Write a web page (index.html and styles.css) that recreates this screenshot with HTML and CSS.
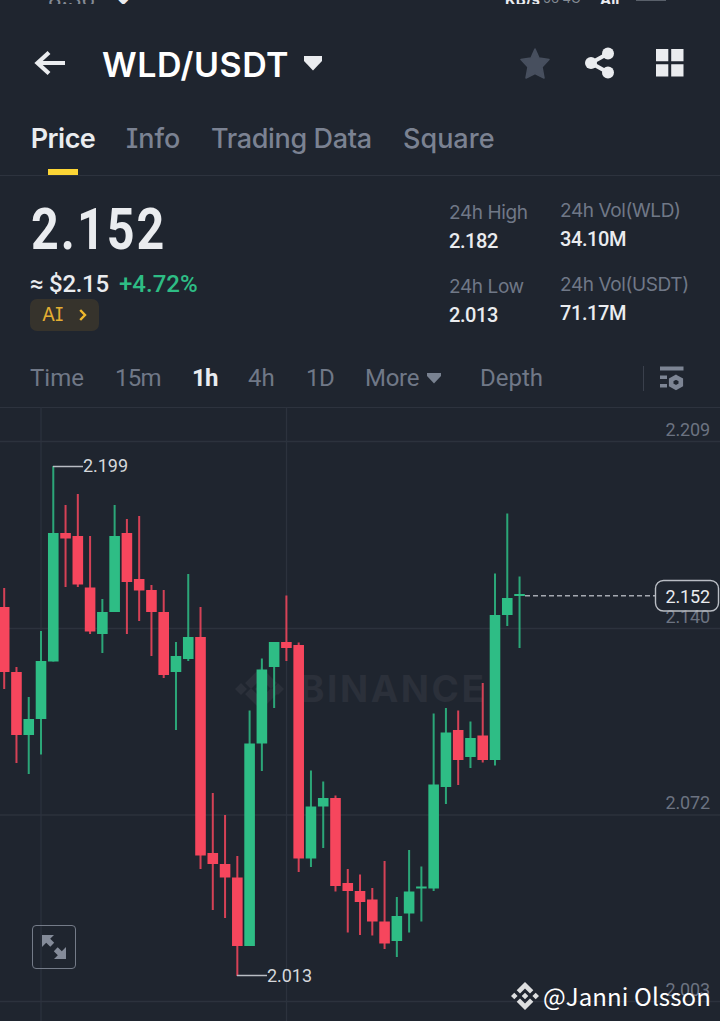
FILE: index.html
```html
<!DOCTYPE html>
<html lang="en">
<head>
    <meta charset="UTF-8">
    <meta name="viewport" content="width=device-width, initial-scale=1.0">
    <title>WLD/USDT</title>

    <link rel="stylesheet" href="styles.css">
</head>
<body>
    <div class="status">
        <span class="clock">8:36</span>
        <span class="drop">◆</span>
        <span class="speed">KB/s</span>
        <span class="signal">56 4G</span>
        <span class="wifi">Ail</span>
        <span class="battery"></span>
    </div>

    <header class="topBar">
        <svg class="back" width="32" height="26" viewBox="0 0 32 26">
            <path d="M31 13H4M15 2.5L3.5 13L15 23.5" fill="none" stroke="#eaecef" stroke-width="4.2"/>
        </svg>
        <h1>WLD/USDT</h1>
        <svg class="caret" width="18" height="15" viewBox="0 0 18 15">
            <path d="M0 0H18V5L9 14.5L0 5Z" fill="#eaecef"/>
        </svg>
        <svg class="star" width="30" height="31" viewBox="0 0 30 31">
            <path d="M15 1L19 10L29 11.5L22 19L24 30L15 25.5L6 30L8 19L1 11.5L11 10Z" fill="#474f5e" stroke="#474f5e" stroke-width="1.5" stroke-linejoin="round"/>
        </svg>
        <svg class="share" width="30" height="32" viewBox="0 0 30 32">
            <path d="M23 6.5L6 16L23 25.5" fill="none" stroke="#eaecef" stroke-width="4"/>
            <circle cx="6" cy="16" r="6" fill="#eaecef"/>
            <circle cx="23" cy="6.5" r="6" fill="#eaecef"/>
            <circle cx="23" cy="25.5" r="6" fill="#eaecef"/>
        </svg>
        <svg class="grid" width="28" height="28" viewBox="0 0 28 28">
            <path d="M0 0H12.3V12.3H0ZM15.2 0H27.5V12.3H15.2ZM0 15.2H12.3V27.5H0ZM15.2 15.2H27.5V27.5H15.2Z" fill="#eaecef"/>
        </svg>
    </header>

    <nav class="tabs">
        <span class="tab active tabPrice">Price</span>
        <span class="tab tabInfo">Info</span>
        <span class="tab tabData">Trading Data</span>
        <span class="tab tabSquare">Square</span>
    </nav>

    <section class="ticker">
        <div class="main">
            <div class="price">2.152</div>
            <div class="sub"><span class="usd">≈ $2.15</span><span class="change">+4.72%</span></div>
            <div class="ai">
                <span>AI</span>
                <svg width="8" height="12" viewBox="0 0 8 12">
                    <path d="M1.2 1L6 6L1.2 11" fill="none" stroke="#f0b92d" stroke-width="2.4"/>
                </svg>
            </div>
        </div>
        <dl class="stats left">
            <dt>24h High</dt>
            <dd>2.182</dd>
            <dt>24h Low</dt>
            <dd>2.013</dd>
        </dl>
        <dl class="stats right">
            <dt>24h Vol(WLD)</dt>
            <dd>34.10M</dd>
            <dt>24h Vol(USDT)</dt>
            <dd>71.17M</dd>
        </dl>
    </section>

    <nav class="periods">
        <span class="pTime">Time</span>
        <span class="p15">15m</span>
        <span class="p1h active">1h</span>
        <span class="p4h">4h</span>
        <span class="p1d">1D</span>
        <span class="pMore">More
            <svg width="14" height="11" viewBox="0 0 14 11"><path d="M0 0H14V3L7 10.5L0 3Z" fill="#798291"/></svg>
        </span>
        <span class="pDepth">Depth</span>
        <svg class="settings" width="24" height="25" viewBox="0 0 24 25">
            <path d="M0 0.5H23.5V4.5H0ZM0 9.5H7V13H0ZM0 18H7V21.5H0Z" fill="#7d8594"/>
            <path d="M16 11.2L20.8 13.8V19L16 21.6L11.2 19V13.8Z" fill="none" stroke="#7d8594" stroke-width="4.6"/>
        </svg>
    </nav>

    <main class="chart">
        <svg id="chart" width="720" height="614" viewBox="0 407 720 614">
            <g class="lines">
                <path d="M0 441.5H720M0 628.5H720M0 815H720M0 1001.5H720M41 407V1021M286.5 407V1021"/>
            </g>
            <g class="watermark">
                <path d="M261 667L277 683L271 689L261 679L251 689L245 683ZM245 694L251 688L261 698L271 688L277 694L261 710ZM241 683L247 689L241 695L235 689ZM278 683L284 689L278 695L272 689ZM261 683L267 689L261 695L255 689Z"/>
                <text x="300" y="702" textLength="184">BINANCE</text>
            </g>
            <g id="candles"></g>
            <g class="marks">
                <path d="M53 466.5H83M237 975.5H267"/>
                <text x="83" y="471.5" textLength="45">2.199</text>
                <text x="267" y="981.5" textLength="45">2.013</text>
            </g>
            <g class="scale">
                <text x="665.5" y="435.5" textLength="44.5">2.209</text>
                <text x="665.5" y="622.5" textLength="44.5">2.140</text>
                <text x="665.5" y="808.5" textLength="44.5">2.072</text>
                <text x="665.5" y="995.5" textLength="44.5">2.003</text>
            </g>
            <path class="dash" d="M525 595.7H655"/>
            <rect class="tagBox" x="655.5" y="580.5" width="63" height="30.5" rx="8"/>
            <text class="tagText" x="665.5" y="602.5" textLength="44.5">2.152</text>
        </svg>
        <div class="expand">
            <svg width="26" height="26" viewBox="0 0 26 26">
                <path d="M1 1H13L9.2 4.8L13.2 8.8L9.3 12.7L5.2 8.7L1 13ZM25 25H13L16.8 21.2L12.8 17.2L16.7 13.3L20.8 17.3L25 13Z" fill="#848b99"/>
            </svg>
        </div>
        <div class="author">
            <svg width="28" height="28" viewBox="0 0 28 28">
                <path d="M14 0L22.3 8.3L19 11.6L14 6.6L9 11.6L5.7 8.3ZM5.7 19.7L9 16.4L14 21.4L19 16.4L22.3 19.7L14 28ZM3.3 10.7L6.6 14L3.3 17.3L0 14ZM24.7 10.7L28 14L24.7 17.3L21.4 14ZM14 10.7L17.3 14L14 17.3L10.7 14Z" fill="#dedfe0"/>
            </svg>
            <span>@Janni Olsson</span>
        </div>
    </main>

    <script>
        // direction, high, body top, body bottom, low
        const candles = [
            ["down", 588, 607, 672, 689],
            ["down", 667, 672, 735, 763],
            ["up", 697, 719, 735, 774],
            ["up", 631, 661, 719, 754.5],
            ["up", 466, 533, 661.5, 661.5],
            ["down", 505, 533, 538.5, 587],
            ["down", 494, 536, 584.5, 587],
            ["down", 536, 587.5, 631.5, 634],
            ["up", 599, 612, 634, 653],
            ["up", 505, 536, 612, 612],
            ["down", 519, 533, 582, 634],
            ["down", 516, 579, 590.5, 621],
            ["down", 585, 590, 612, 656],
            ["down", 590, 612, 675, 678],
            ["up", 642, 656, 672, 730],
            ["up", 574, 637, 659, 661],
            ["down", 607, 637, 855.5, 869],
            ["down", 793, 853, 864, 910],
            ["down", 815, 864, 877.5, 918],
            ["down", 856, 877.5, 946, 976],
            ["up", 710.5, 743.5, 946, 946],
            ["up", 658.5, 669.5, 743.5, 771],
            ["up", 642, 642, 667, 708],
            ["down", 595.5, 642, 648, 661],
            ["down", 642.5, 645, 858.5, 872],
            ["up", 770.5, 806.5, 858.5, 867],
            ["up", 781.5, 798, 806.5, 848],
            ["down", 795.5, 798, 886, 891.5],
            ["down", 869, 883, 891, 932.5],
            ["down", 874.5, 891, 902, 935],
            ["down", 888, 899.5, 921.5, 935.5],
            ["down", 861, 921.5, 943.5, 949],
            ["up", 897, 916, 941, 957],
            ["up", 850, 891.5, 913.5, 932.5],
            ["up", 866.5, 886.5, 888.5, 921.5],
            ["up", 713.5, 784.5, 888.5, 891],
            ["up", 708, 732.5, 787, 804],
            ["down", 710.5, 730, 760, 785],
            ["up", 721.5, 738, 757, 768],
            ["down", 683, 735.5, 760, 762.5],
            ["up", 573.5, 615, 760, 765.5],
            ["up", 513.5, 598, 615, 626],
            ["up", 576.5, 594, 596, 648]
        ];

        let html = "";
        candles.forEach(([dir, high, top, bottom, low], i) => {
            let x = 4.2 + i * 12.27;
            html += `<g class="${dir}">
                <rect class="wick" x="${x - 1}" y="${high}" width="2" height="${low - high}"/>
                <rect x="${x - 5.3}" y="${top}" width="10.6" height="${bottom - top}"/>
            </g>`;
        });
        document.getElementById("candles").innerHTML = html;
    </script>
</body>
</html>
```
FILE: styles.css
```css
body{
    margin: 0;
    width: 720px;
    height: 1021px;
    overflow: hidden;
    background-color: #1f252f;
    color: #eaecef;
    font-family: Inter, "Liberation Sans", sans-serif;
}

svg{
    display: block;
    flex-shrink: 0;
}

.status{
    height: 4px;
    overflow: hidden;
    display: flex;
    align-items: flex-end;
    font-size: 15px;
    font-weight: 700;
    line-height: 10px;
    white-space: nowrap;
}
.status span{
    margin-bottom: -1px;
}
.status .clock{
    margin-left: 48px;
    width: 70px;
    font-size: 22px;
    font-weight: 400;
    color: #858b94;
    margin-bottom: 0;
}
.status .drop{
    width: 387px;
    font-size: 10px;
}
.status .speed{
    width: 38px;
}
.status .signal{
    width: 57px;
    color: #858b94;
    font-weight: 400;
    font-size: 13px;
    margin-bottom: 1px;
}
.status .wifi{
    width: 36px;
}
.status .battery{
    width: 30px;
    height: 1px;
    margin-bottom: 3px;
    background-color: #59606a;
}

.topBar{
    height: 116px;
    display: flex;
    align-items: center;
    box-sizing: border-box;
    padding: 2px 36px 0 34px;
}
.topBar h1{
    margin: 3px 0 0 36px;
    width: 185px;
    font-size: 34px;
    font-weight: 600;
    line-height: 40px;
    letter-spacing: 0.5px;
    color: #fff;
    white-space: nowrap;
}
.topBar .caret{
    margin-left: 17px;
}
.topBar .star{
    margin-left: auto;
}
.topBar .share{
    margin-left: 35px;
}
.topBar .grid{
    margin-left: 41px;
}

.tabs{
    height: 56px;
    box-sizing: border-box;
    display: flex;
    padding-left: 31px;
    border-bottom: 1px solid #2d333e;
    font-size: 27px;
    font-weight: 500;
    line-height: 38px;
    color: #7b8292;
    white-space: nowrap;
    font-feature-settings: "cv08";
}
.tab{
    margin-right: 31px;
}
.tab.active{
    color: #eaecef;
    font-weight: 600;
    letter-spacing: -0.5px;
    display: flex;
    flex-direction: column;
    align-items: center;
}
.tab.active::after{
    content: "";
    width: 30px;
    height: 6px;
    margin-top: 11px;
    background-color: #fcd535;
}
.tabPrice{
    width: 64px;
}
.tabInfo{
    width: 54px;
}
.tabData{
    width: 161px;
    letter-spacing: -0.35px;
}

.ticker{
    height: 170px;
    display: flex;
    font-family: Roboto, sans-serif;
}
.main{
    width: 419px;
    padding-left: 30px;
}
.price{
    margin-top: 24px;
    height: 60px;
    font-size: 57px;
    font-weight: 700;
    line-height: 60px;
    letter-spacing: 2.4px;
    transform: translateX(1px) scaleX(0.85);
    transform-origin: left;
}
.sub{
    height: 38px;
    display: flex;
    font-size: 24px;
    font-weight: 500;
    line-height: 48px;
    white-space: nowrap;
}
.usd{
    width: 89px;
    letter-spacing: -0.3px;
}
.change{
    color: #2ebd85;
}
.ai{
    width: 69px;
    height: 32px;
    box-sizing: border-box;
    margin-top: 1px;
    padding: 0 12px;
    display: flex;
    justify-content: space-between;
    align-items: center;
    border-radius: 7px;
    background-color: #36332c;
    color: #e3ae32;
    font: 19px/32px Inter, sans-serif;
    font-feature-settings: "cv08";
}
.stats{
    margin: 22px 0 0;
    font-family: Inter, sans-serif;
    font-size: 19px;
    line-height: 29px;
    letter-spacing: -0.4px;
    white-space: nowrap;
}
.stats.left{
    width: 111px;
}
.stats.right{
    margin-top: 20px;
}
.stats dt{
    color: #707887;
}
.stats dd{
    margin: 0 0 16px;
    font-family: Roboto, sans-serif;
    font-size: 20px;
    font-weight: 500;
}

.periods{
    height: 62px;
    box-sizing: border-box;
    display: flex;
    align-items: center;
    padding-left: 30px;
    padding-top: 3px;
    border-bottom: 1px solid #2d333e;
    font-family: Roboto, sans-serif;
    font-size: 24px;
    color: #707887;
    white-space: nowrap;
}
.periods .active{
    color: #eaecef;
    font-weight: 700;
    letter-spacing: -0.8px;
}
.pTime{
    width: 85px;
}
.p15{
    width: 77px;
    letter-spacing: -0.8px;
}
.p1h{
    width: 56px;
}
.p4h{
    width: 58px;
}
.p1d{
    width: 59px;
    letter-spacing: -0.5px;
}
.pMore{
    width: 115px;
    display: flex;
    align-items: center;
    gap: 8px;
    letter-spacing: -0.3px;
}
.settings{
    margin-left: auto;
    margin-right: 36px;
    padding-left: 16px;
    border-left: 1px solid #3a404c;
}

.chart{
    position: relative;
    height: 614px;
    margin-top: -1px;
}
.chart text{
    font-family: Roboto, sans-serif;
    font-size: 18px;
}
.lines path{
    stroke: #2c323d;
    stroke-width: 1.3;
}
.watermark{
    fill: #2b303a;
}
.chart .watermark text{
    font-family: Inter, sans-serif;
    font-size: 37px;
    font-weight: 700;
}
.up{
    fill: #2ebd85;
}
.down{
    fill: #f6465d;
}
.wick{
    opacity: 0.85;
}
.marks path{
    stroke: #b9bdc4;
    stroke-width: 1.5;
}
.marks text{
    fill: #d5d8dc;
}
.scale text{
    fill: #6c7381;
}
.dash{
    stroke: #a5a9b1;
    stroke-width: 1.6;
    stroke-dasharray: 5 3;
}
.tagBox{
    fill: none;
    stroke: #b9bdc4;
    stroke-width: 1.4;
}
.chart .tagText{
    fill: #eaecef;
}
.expand{
    position: absolute;
    left: 32px;
    top: 518px;
    width: 42px;
    height: 42px;
    display: flex;
    align-items: center;
    justify-content: center;
    border: 1px solid #747b88;
    border-radius: 4px;
}
.author{
    position: absolute;
    left: 511px;
    top: 573px;
    display: flex;
    align-items: center;
    gap: 4px;
    color: #fff;
    font: 24px/32px "Noto Sans CJK SC", sans-serif;
    letter-spacing: 0.1px;
    white-space: nowrap;
}
```
